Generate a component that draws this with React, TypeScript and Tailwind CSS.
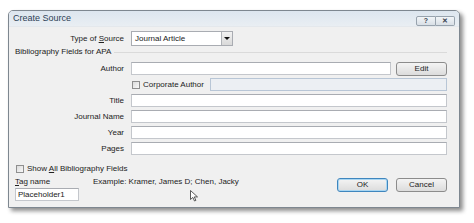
import React from "react"

const font = { fontFamily: '"Liberation Sans", Arial, sans-serif' }

function Field({ label, children }: { label: string; children?: React.ReactNode }) {
    return (
        <div className="flex items-center h-[13px] mt-[3px]">
            <div className="w-[116px] text-right pr-[1px] text-[8px] text-[#222]">{label}</div>
            <div className="ml-[6px] flex-1 flex">
                {children ?? <div className="flex-1 h-[13px] bg-white border border-[#c4c7cc] border-t-[#a9acb2]" />}
            </div>
        </div>
    )
}

function Checkbox() {
    return (
        <div className="w-[8px] h-[8px] border border-[#8f8f8f] bg-gradient-to-br from-[#dcdcdc] to-[#f8f8f8]" />
    )
}

function Button({ label, primary }: { label: string; primary?: boolean }) {
    return (
        <div
            className={`w-[51px] h-[14px] flex items-center justify-center text-[8px] text-[#222] rounded-[3px] border bg-gradient-to-b from-[#f4f4f4] to-[#dcdcdc] ${
                primary ? "border-[#3f86be] shadow-[inset_0_0_0_1px_#a9d6f2]" : "border-[#8c8c8c]"
            }`}
        >
            {label}
        </div>
    )
}

export default function App() {
    return (
        <div className="w-[474px] h-[223px] bg-white pt-[10px] pl-[8px]" style={font}>
            <div className="w-[452px] h-[198px] border border-[#7e8790] rounded-t-[5px] bg-[#f0f0f0] shadow-[3px_3px_4px_rgba(0,0,0,0.45)] flex flex-col">
                {/* title bar */}
                <div className="h-[16px] flex items-center pl-[4px] pr-[4px] rounded-t-[4px] bg-gradient-to-b from-[#dde6ef] to-[#e9eef3] border-b border-[#e4e8ec]">
                    <span className="text-[9px] text-[#2c3e55]">Create Source</span>
                    <div className="ml-auto flex mt-[4px]">
                        <div className="w-[20px] h-[10px] border border-[#98a3ae] rounded-l-[2px] bg-gradient-to-b from-[#f2f5f8] to-[#d8dfe6] flex items-center justify-center text-[7px] leading-none text-[#3b4652] font-bold">?</div>
                        <div className="w-[19px] h-[10px] border border-l-0 border-[#98a3ae] rounded-r-[2px] bg-gradient-to-b from-[#f2f5f8] to-[#d8dfe6] flex items-center justify-center text-[7px] leading-none text-[#3b4652] font-bold">✕</div>
                    </div>
                </div>

                <div className="flex-1 pr-[12px] text-[8px] text-[#222]">
                    {/* type of source */}
                    <div className="flex items-center h-[15px] mt-[4px]">
                        <div className="w-[116px] text-right pr-[1px]">
                            Type of <span className="underline">S</span>ource
                        </div>
                        <div className="ml-[6px] w-[102px] h-[15px] bg-white border border-[#a9acb2] flex items-center">
                            <span className="pl-[3px] flex-1">Journal Article</span>
                            <div className="w-[11px] h-[13px] border-l border-[#b0b3b8] bg-gradient-to-b from-[#f2f2f2] to-[#d9d9d9] flex items-center justify-center">
                                <div className="w-0 h-0 border-l-[3px] border-r-[3px] border-t-[3px] border-l-transparent border-r-transparent border-t-[#111]" />
                            </div>
                        </div>
                    </div>

                    {/* group header */}
                    <div className="flex items-center h-[10px] mt-[1px] pl-[6px]">
                        <span>Bibliography Fields for APA</span>
                        <div className="flex-1 ml-[3px] border-t border-[#dadada]" />
                    </div>

                    {/* author */}
                    <div className="flex items-center h-[13px] mt-[5px]">
                        <div className="w-[116px] text-right pr-[1px]">Author</div>
                        <div className="ml-[6px] flex-1 h-[13px] bg-white border border-[#c4c7cc] border-t-[#a9acb2]" />
                        <div className="ml-[5px]">
                            <Button label="Edit" />
                        </div>
                    </div>

                    {/* corporate author */}
                    <div className="flex items-center h-[13px] mt-[3px]">
                        <div className="w-[116px]" />
                        <div className="ml-[7px]">
                            <Checkbox />
                        </div>
                        <span className="ml-[3px] w-[67px]">Corporate Author</span>
                        <div className="flex-1 h-[13px] bg-[#eceff3] border border-[#b8c6d6]" />
                    </div>

                    <Field label="Title" />
                    <Field label="Journal Name" />
                    <Field label="Year" />
                    <Field label="Pages" />

                    {/* show all */}
                    <div className="flex items-center h-[9px] mt-[9px] pl-[7px]">
                        <Checkbox />
                        <span className="ml-[3px]">
                            Show <span className="underline">A</span>ll Bibliography Fields
                        </span>
                    </div>

                    {/* bottom */}
                    <div className="flex mt-[3px] pl-[6px]">
                        <div className="flex flex-col">
                            <span className="h-[11px] leading-[11px]">
                                <span className="underline">T</span>ag name
                            </span>
                            <div className="mt-[1px] w-[64px] h-[13px] bg-white border border-[#c4c7cc] border-t-[#a9acb2] flex items-center pl-[2px]">
                                Placeholder1
                            </div>
                        </div>
                        <div className="ml-[14px] relative">
                            <span className="block h-[11px] leading-[11px]">Example: Kramer, James D; Chen, Jacky</span>
                            <svg className="absolute left-[97px] top-[14px]" width="9" height="12" viewBox="0 0 9 12">
                                <path d="M0.5 0.5 L0.5 9.5 L2.8 7.4 L4.5 11 L5.9 10.4 L4.3 6.9 L7.5 6.9 Z" fill="#fff" stroke="#333" strokeWidth="0.8" />
                            </svg>
                        </div>
                        <div className="ml-auto flex gap-[8px] mt-[2px]">
                            <Button label="OK" primary />
                            <Button label="Cancel" />
                        </div>
                    </div>
                </div>
            </div>
        </div>
    )
}
